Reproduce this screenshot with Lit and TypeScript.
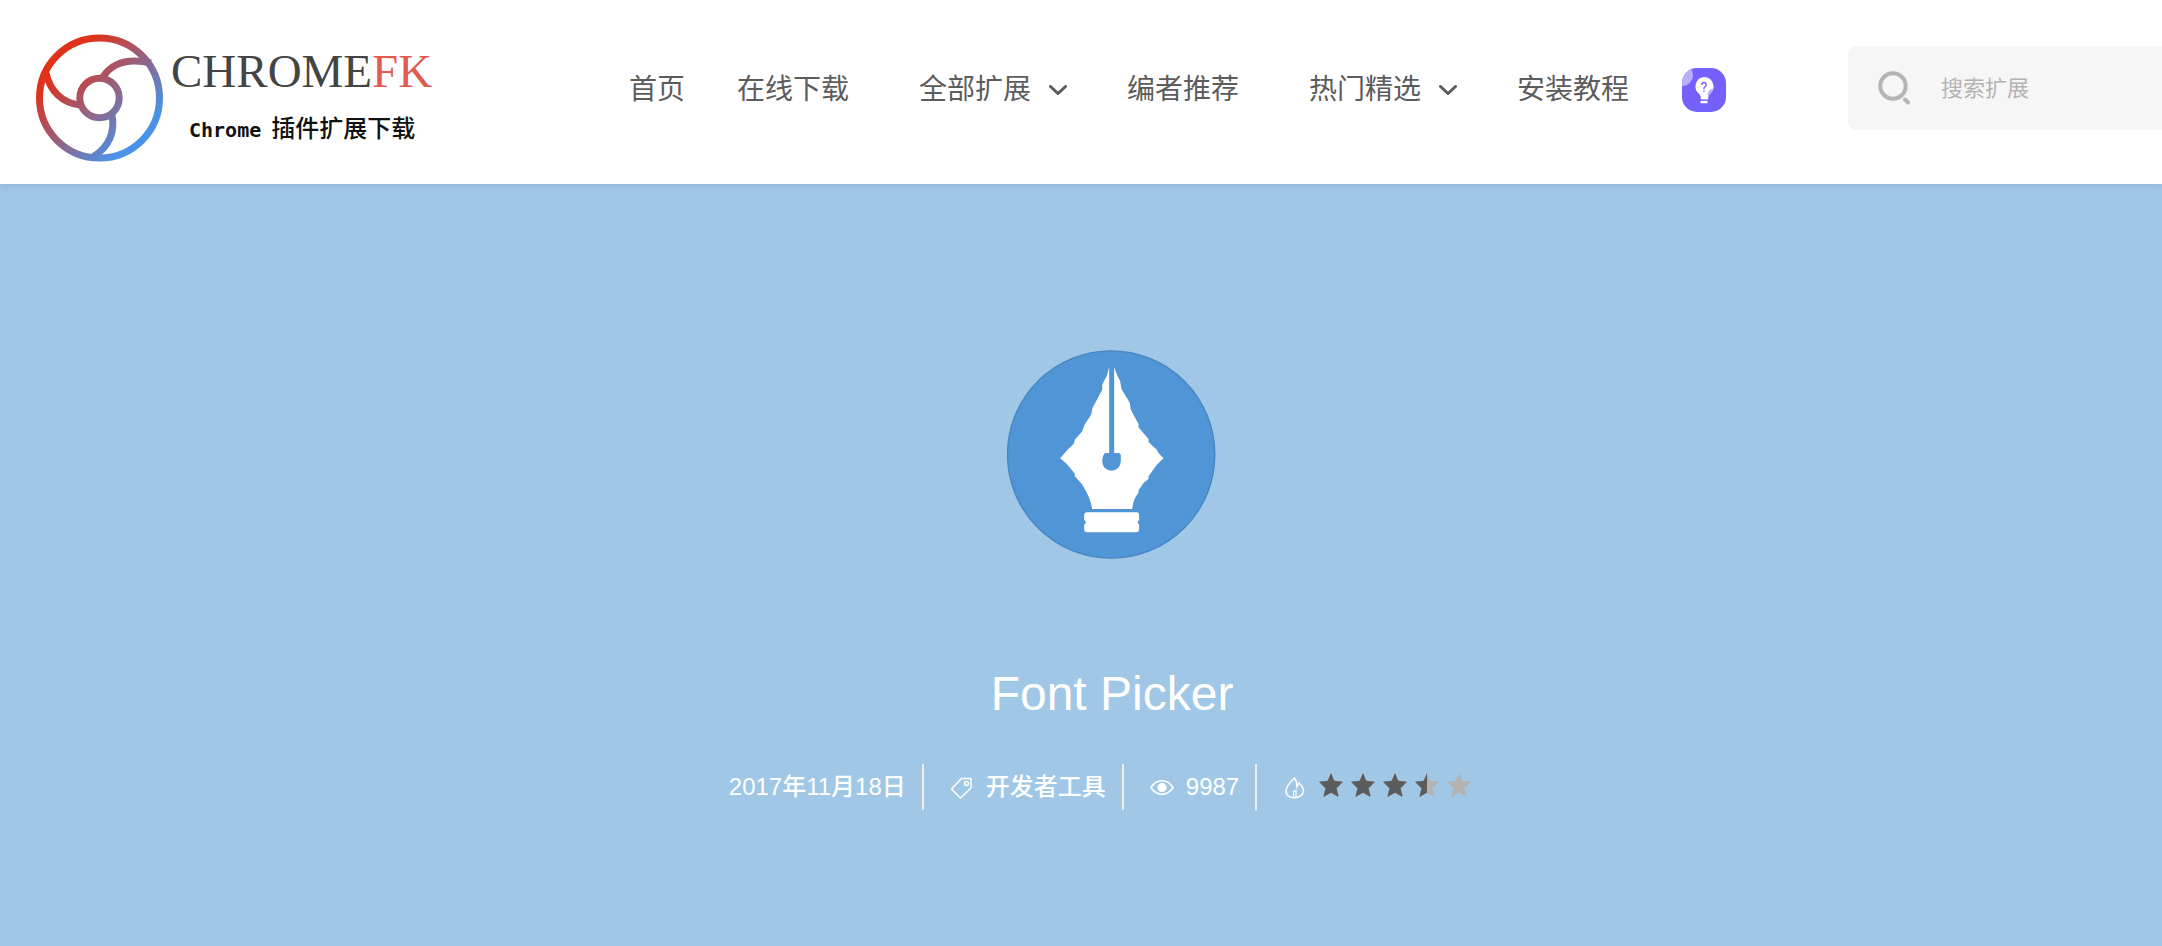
import { LitElement, html, css, svg } from "lit";
import { customElement } from "lit/decorators.js";

type MenuEntry = { label: string; dropdown?: boolean };

const MENU: MenuEntry[] = [
  { label: "首页" },
  { label: "在线下载" },
  { label: "全部扩展", dropdown: true },
  { label: "编者推荐" },
  { label: "热门精选", dropdown: true },
  { label: "安装教程" },
];

const STAR = "M12 0L15.3 7.8L24 8.8L17.6 15.2L19.7 24L12 19.8L4.3 24L6.4 15.2L0 8.8L8.7 7.8z";
const HALF_STAR = "M12 0V19.8L4.3 24L6.4 15.2L0 8.8L8.7 7.8z";

@customElement("site-header")
class SiteHeader extends LitElement {
  static styles = css`
    :host { display: block; position: relative; }
    .bar {
      display: flex;
      align-items: center;
      height: 176px;
      padding: 0 0 8px 36px;
      background: #fff;
      box-shadow: 0 0 8px rgba(0, 0, 0, 0.15);
    }
    a { color: inherit; text-decoration: none; }
    .brand { display: flex; flex: none; align-items: center; gap: 7px; padding-top: 20px; width: 567px; }
    .mark { display: block; width: 128px; height: 128px; }
    .words { display: flex; flex-direction: column; padding-bottom: 4px; }
    .name { font: 47px/48px "Liberation Serif", serif; color: #444; }
    .accent { color: #e25a50; }
    .tagline {
      display: flex;
      align-items: baseline;
      gap: 10px;
      margin: 16px 0 0 18px;
      font: bold 20px/32px "DejaVu Sans Mono", monospace;
      color: #111;
    }
    .cjk { font: 500 24px/32px "Noto Sans CJK SC", sans-serif; }
    .menu { display: flex; align-items: center; flex: none; padding-top: 4px; }
    .item { display: flex; align-items: center; padding: 0 26px; font-size: 28px; line-height: 40px; color: #5c5c5c; }
    .item.drop { padding: 0 34px 0 44px; gap: 18px; }
    .chevron { display: block; width: 18px; height: 10px; }
    .tip { display: block; padding-left: 27px; }
    .bulb { display: block; width: 44px; height: 44px; }
    .search {
      display: flex;
      align-items: center;
      flex: 1;
      gap: 30px;
      box-sizing: border-box;
      height: 84px;
      margin-left: 122px;
      padding-left: 30px;
      background: #f6f6f6;
      border-radius: 8px 0 0 8px;
    }
    .lens { display: block; flex: none; width: 33px; height: 34px; }
    .field {
      flex: 1;
      min-width: 0;
      padding: 2px 0 0;
      border: 0;
      outline: 0;
      background: none;
      font: 22px/32px "Liberation Sans", "Noto Sans CJK SC", sans-serif;
      color: #5c5c5c;
    }
    .field::placeholder { color: #b3b3b3; opacity: 1; }
  `;

  render() {
    return html`
      <header class="bar">
        <a class="brand" href="#" aria-label="ChromeFK">
          <svg class="mark" viewBox="0 0 128 128" fill="none" stroke="url(#g)" stroke-width="7">
            <defs>
              <linearGradient id="g" gradientUnits="userSpaceOnUse" x1="25" y1="35" x2="95" y2="105">
                <stop offset="0" stop-color="#e0311a" />
                <stop offset="1" stop-color="#4a92e8" />
              </linearGradient>
            </defs>
            <circle cx="63.5" cy="64" r="60" />
            <circle cx="63.5" cy="64" r="19.7" />
            <path d="M67 43C76 29 92 24 115 29" />
            <path d="M44 71C26 69 14 57 10 39" />
            <path d="M76 81C79 97 74 112 57 123" />
          </svg>
          <span class="words">
            <span class="name">CHROME<span class="accent">FK</span></span>
            <span class="tagline"><span>Chrome</span><span class="cjk">插件扩展下载</span></span>
          </span>
        </a>
        <nav class="menu">
          ${MENU.map(
            (m) => html`<a class="item ${m.dropdown ? "drop" : ""}" href="#">${m.label}${m.dropdown
              ? html`<svg class="chevron" viewBox="0 0 18 10" fill="none" stroke="#5c5c5c" stroke-width="3" stroke-linecap="round"><path d="M1.5 1.5L9 8.5L16.5 1.5" /></svg>`
              : ""}</a>`
          )}
          <a class="tip" href="#" aria-label="提示">
            <svg class="bulb" viewBox="0 0 44 44">
              <defs><clipPath id="r"><rect width="44" height="44" rx="15" /></clipPath></defs>
              <g clip-path="url(#r)">
                <rect width="44" height="44" fill="#7460fb" />
                <circle cx="0" cy="7" r="11" fill="#b9aefd" />
              </g>
              <path fill="#fff" d="M22 9a9.5 9.5 0 0 1 5.5 17.2q-1.5 1.3-1.5 5.3h-7q0-4-1.5-5.3A9.5 9.5 0 0 1 22 9zM18.500 33h7v2.3h-7z" />
              <path fill="#b9aefd" d="M31 20.5a9.5 9.5 0 0 1-3.500 5.7q-1.5 1.3-1.5 3.5q-2-7 5-9.2z" />
              <path d="M19.8 17q0-2.5 2.2-2.5t2.2 2.5q0 1.3-2.2 2.7v1.5M22 22.3v1.5" fill="none" stroke="#7460fb" stroke-width="1.3" />
            </svg>
          </a>
        </nav>
        <label class="search">
          <svg class="lens" viewBox="0 0 33 34" fill="none" stroke="#b5b5b5" stroke-width="4">
            <circle cx="15" cy="15" r="12.7" />
            <path d="M27 28.5l3 3" stroke-linecap="round" />
          </svg>
          <input class="field" type="search" placeholder="搜索扩展" aria-label="搜索扩展" />
        </label>
      </header>
    `;
  }
}

@customElement("extension-hero")
class ExtensionHero extends LitElement {
  static styles = css`
    :host { display: block; background: #a1c7e7; color: #fff; }
    .hero { display: flex; flex-direction: column; align-items: center; padding: 166px 0 0 60px; }
    .logo { display: block; width: 209px; height: 209px; }
    .title { margin: 107px 0 42px; padding-left: 2px; font-size: 48px; line-height: 56px; font-weight: 400; }
    .meta { display: flex; margin: 0; padding: 0; list-style: none; font-size: 24px; line-height: 46px; font-weight: 500; }
    .cell { display: flex; align-items: center; padding: 0 16px 0 26px; border-right: 2px solid #eee; }
    .cell:first-child { padding-left: 0; }
    .cell:last-child { border-right: 0; padding-right: 22px; }
    .icon { display: block; width: 24px; height: 24px; margin-right: 12px; }
    a { color: inherit; text-decoration: none; }
    .stars { display: flex; gap: 8px; padding-bottom: 4px; }
    .star { display: block; width: 24px; height: 24px; }
  `;

  private star(fill: number) {
    return html`<svg class="star" viewBox="0 0 24 24">
      <path d=${STAR} fill="#b3b3b3" />
      ${fill > 0 ? svg`<path d=${fill === 1 ? STAR : HALF_STAR} fill="#5c5c5c" />` : ""}
    </svg>`;
  }

  render() {
    return html`
      <main class="hero">
        <svg class="logo" viewBox="81 61 626 627" role="img" aria-label="Font Picker">
          <circle cx="393" cy="374.5" r="311" fill="#5095d6" stroke="#4786c1" stroke-width="4" />
          <path fill="#fff" d="M387 112L380 138L366 165V180L337 235L333 255L313 285L306 305L284 330L281 342L262 360L240 386L260 403L284 432V440L305 463Q332 505 336 538H456Q460 505 475 490V482L490 460L505 448V440L530 405L550 386L535 370L530 360L505 337V328L475 293V283L452 240L449 220L424 178L420 155L409 132L402 112V370H415Q422 371 422 380V395A28 28 0 0 1 366 395Q367 376 375 370H387Z" />
          <path fill="#fff" d="M320 548H469Q477 549 477 557V570L472 578L477 586V599Q476 608 468 608H321Q312 608 312 599V586L318 578L312 570V557Q312 549 320 548Z" />
        </svg>
        <h1 class="title">Font Picker</h1>
        <ul class="meta">
          <li class="cell"><time datetime="2017-11-18">2017年11月18日</time></li>
          <li class="cell">
            <svg class="icon" viewBox="0 0 24 24" fill="none" stroke="#fff" stroke-width="1.5" stroke-linejoin="round">
              <path d="M11.5 3.5H21V13L10.5 23L1.5 14z" /><circle cx="16.5" cy="8.5" r="2" />
            </svg>
            <a href="#">开发者工具</a>
          </li>
          <li class="cell">
            <svg class="icon" viewBox="0 0 24 24" fill="none" stroke="#fff" stroke-width="1.6">
              <path d="M.8 12.5C7 3.5 17 3.5 23.2 12.5C17 21.5 7 21.5 .8 12.5z" /><circle cx="12" cy="12.5" r="3.8" fill="#fff" />
            </svg>
            9987
          </li>
          <li class="cell">
            <svg class="icon" viewBox="0 0 24 24" fill="none" stroke="#fff" stroke-width="1.5">
              <path d="M11.5 3Q3 11 3 16C3 25 20.500 25 20.5 15.5Q20.5 12.5 16 8L14 11.500Q14 6.500 11.5 3z" />
              <path d="M10.5 23v-6.500l2.500-1v7.500" stroke-width="1.2" />
            </svg>
            <span class="stars" role="img" aria-label="3.5">${[1, 1, 1, 0.5, 0].map((n) => this.star(n))}</span>
          </li>
        </ul>
      </main>
    `;
  }
}

@customElement("app-root")
class AppRoot extends LitElement {
  static styles = css`
    :host {
      display: flex;
      flex-direction: column;
      min-height: 100vh;
      overflow: hidden;
      font-family: "Liberation Sans", "Noto Sans CJK SC", sans-serif;
    }
    .head { z-index: 1; }
    .body { flex: 1; }
  `;
  render() {
    return html`<site-header class="head"></site-header><extension-hero class="body"></extension-hero>`;
  }
}
